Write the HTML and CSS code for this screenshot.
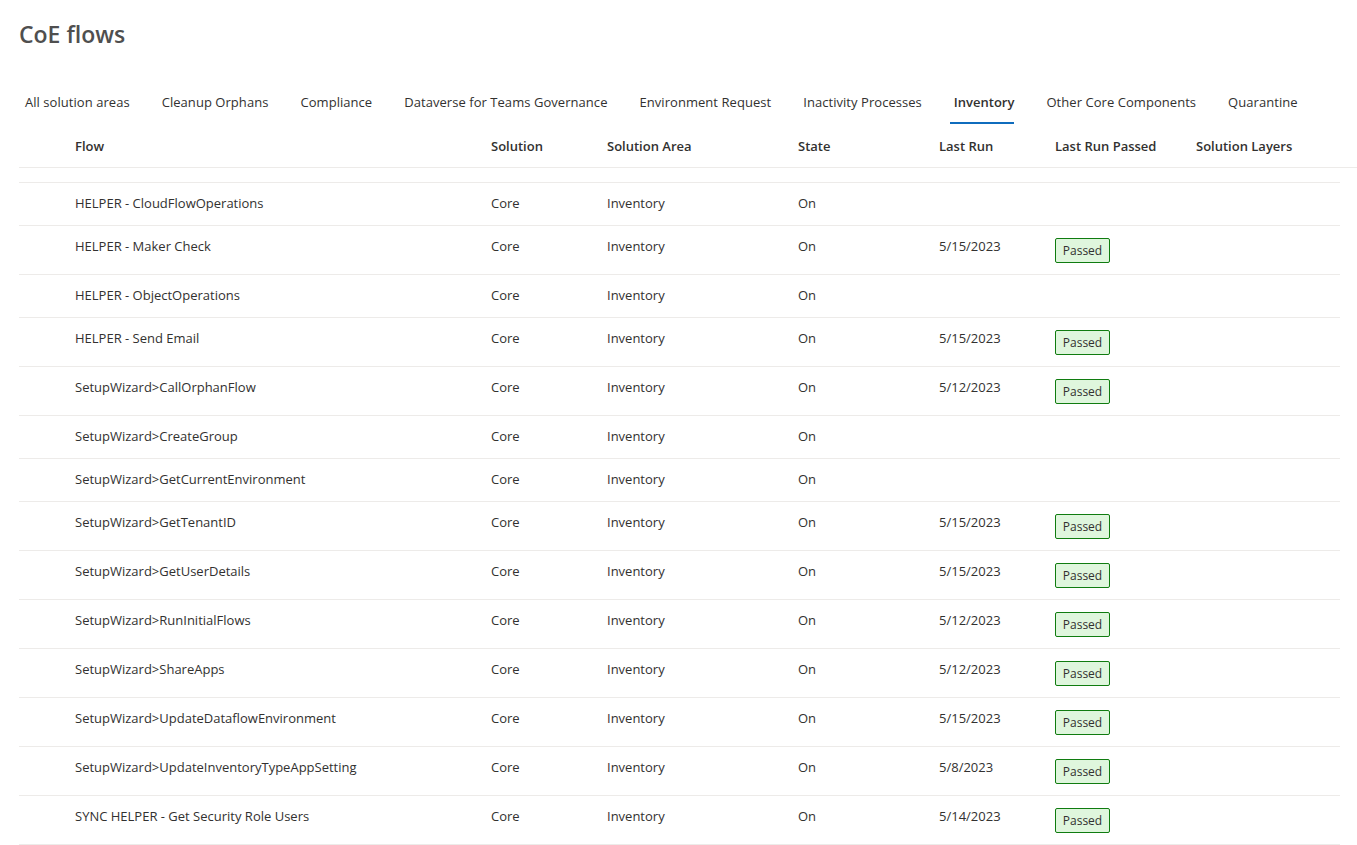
FILE: index.html
```html
<!DOCTYPE html>
<html lang="en">
<head>
<meta charset="utf-8">
<title>CoE flows</title>
<link rel="stylesheet" href="styles.css">
</head>
<body>
<main class="page">
  <h1 class="title">CoE flows</h1>
  <nav class="tabs">
    <span class="tab">All solution areas</span>
    <span class="tab">Cleanup Orphans</span>
    <span class="tab">Compliance</span>
    <span class="tab">Dataverse for Teams Governance</span>
    <span class="tab">Environment Request</span>
    <span class="tab">Inactivity Processes</span>
    <span class="tab active">Inventory</span>
    <span class="tab">Other Core Components</span>
    <span class="tab">Quarantine</span>
  </nav>
  <div class="grid">
    <div class="row head">
      <div class="cell">Flow</div>
      <div class="cell">Solution</div>
      <div class="cell">Solution Area</div>
      <div class="cell">State</div>
      <div class="cell">Last Run</div>
      <div class="cell">Last Run Passed</div>
      <div class="cell">Solution Layers</div>
    </div>
    <div class="body">
      <div class="spacer"></div>
      <div class="row"><div class="cell">HELPER - CloudFlowOperations</div><div class="cell">Core</div><div class="cell">Inventory</div><div class="cell">On</div><div class="cell"></div><div class="cell"></div><div class="cell"></div></div>
      <div class="row"><div class="cell">HELPER - Maker Check</div><div class="cell">Core</div><div class="cell">Inventory</div><div class="cell">On</div><div class="cell">5/15/2023</div><div class="cell"><span class="badge">Passed</span></div><div class="cell"></div></div>
      <div class="row"><div class="cell">HELPER - ObjectOperations</div><div class="cell">Core</div><div class="cell">Inventory</div><div class="cell">On</div><div class="cell"></div><div class="cell"></div><div class="cell"></div></div>
      <div class="row"><div class="cell">HELPER - Send Email</div><div class="cell">Core</div><div class="cell">Inventory</div><div class="cell">On</div><div class="cell">5/15/2023</div><div class="cell"><span class="badge">Passed</span></div><div class="cell"></div></div>
      <div class="row"><div class="cell">SetupWizard&gt;CallOrphanFlow</div><div class="cell">Core</div><div class="cell">Inventory</div><div class="cell">On</div><div class="cell">5/12/2023</div><div class="cell"><span class="badge">Passed</span></div><div class="cell"></div></div>
      <div class="row"><div class="cell">SetupWizard&gt;CreateGroup</div><div class="cell">Core</div><div class="cell">Inventory</div><div class="cell">On</div><div class="cell"></div><div class="cell"></div><div class="cell"></div></div>
      <div class="row"><div class="cell">SetupWizard&gt;GetCurrentEnvironment</div><div class="cell">Core</div><div class="cell">Inventory</div><div class="cell">On</div><div class="cell"></div><div class="cell"></div><div class="cell"></div></div>
      <div class="row"><div class="cell">SetupWizard&gt;GetTenantID</div><div class="cell">Core</div><div class="cell">Inventory</div><div class="cell">On</div><div class="cell">5/15/2023</div><div class="cell"><span class="badge">Passed</span></div><div class="cell"></div></div>
      <div class="row"><div class="cell">SetupWizard&gt;GetUserDetails</div><div class="cell">Core</div><div class="cell">Inventory</div><div class="cell">On</div><div class="cell">5/15/2023</div><div class="cell"><span class="badge">Passed</span></div><div class="cell"></div></div>
      <div class="row"><div class="cell">SetupWizard&gt;RunInitialFlows</div><div class="cell">Core</div><div class="cell">Inventory</div><div class="cell">On</div><div class="cell">5/12/2023</div><div class="cell"><span class="badge">Passed</span></div><div class="cell"></div></div>
      <div class="row"><div class="cell">SetupWizard&gt;ShareApps</div><div class="cell">Core</div><div class="cell">Inventory</div><div class="cell">On</div><div class="cell">5/12/2023</div><div class="cell"><span class="badge">Passed</span></div><div class="cell"></div></div>
      <div class="row"><div class="cell">SetupWizard&gt;UpdateDataflowEnvironment</div><div class="cell">Core</div><div class="cell">Inventory</div><div class="cell">On</div><div class="cell">5/15/2023</div><div class="cell"><span class="badge">Passed</span></div><div class="cell"></div></div>
      <div class="row"><div class="cell">SetupWizard&gt;UpdateInventoryTypeAppSetting</div><div class="cell">Core</div><div class="cell">Inventory</div><div class="cell">On</div><div class="cell">5/8/2023</div><div class="cell"><span class="badge">Passed</span></div><div class="cell"></div></div>
      <div class="row"><div class="cell">SYNC HELPER - Get Security Role Users</div><div class="cell">Core</div><div class="cell">Inventory</div><div class="cell">On</div><div class="cell">5/14/2023</div><div class="cell"><span class="badge">Passed</span></div><div class="cell"></div></div>
    </div>
  </div>
</main>
</body>
</html>
```
FILE: styles.css
```css
* { box-sizing: border-box; }
html, body { margin: 0; padding: 0; background: #ffffff; }
body {
  font-family: "Open Sans", "Noto Sans", sans-serif;
  font-size: 13px;
  color: #323130;
  overflow: hidden;
}
.page { padding: 0 0 0 19px; }
.title {
  margin: 0;
  padding-top: 19px;
  height: 80px;
  font-size: 23px;
  line-height: 30px;
  font-weight: 600;
  color: #4f4f4f;
}
.tabs {
  display: flex;
  height: 45px;
  align-items: stretch;
  padding-left: 2px;
}
.tab {
  position: relative;
  padding: 12px 0 0;
  margin: 0 4px;
  line-height: 20px;
  white-space: nowrap;
  letter-spacing: 0.05px;
  color: #323130;
}
.tab + .tab { margin-left: 28px; }
.tab.active { font-weight: 600; letter-spacing: 0; }
.tab.active::after {
  content: "";
  position: absolute;
  left: -4px;
  right: 0;
  top: 42px;
  height: 2px;
  background: #0f6cbd;
}
.row {
  display: grid;
  grid-template-columns: 56px 416px 116px 191px 141px 116px 141px 144px;
  width: 1321px;
  border-bottom: 1px solid #edebe9;
}
.row .cell:first-child { grid-column: 2; }
.head {
  width: auto;
  height: 43px;
  align-items: center;
  font-weight: 600;
}
.spacer { height: 15px; width: 1321px; border-bottom: 1px solid #edebe9; }
.body .row { min-height: 43px; }
.cell {
  padding: 11px 8px 11px 0;
  line-height: 19px;
  white-space: nowrap;
}
.head .cell { padding-bottom: 0; padding-top: 1px; }
.badge {
  display: inline-flex;
  align-items: center;
  justify-content: center;
  margin-top: 1px;
  width: 55px;
  height: 25px;
  border: 1px solid #107c10;
  border-radius: 2px;
  background: #dff6dd;
  font-size: 12px;
  color: #323130;
  line-height: 1;
  vertical-align: top;
}
```
